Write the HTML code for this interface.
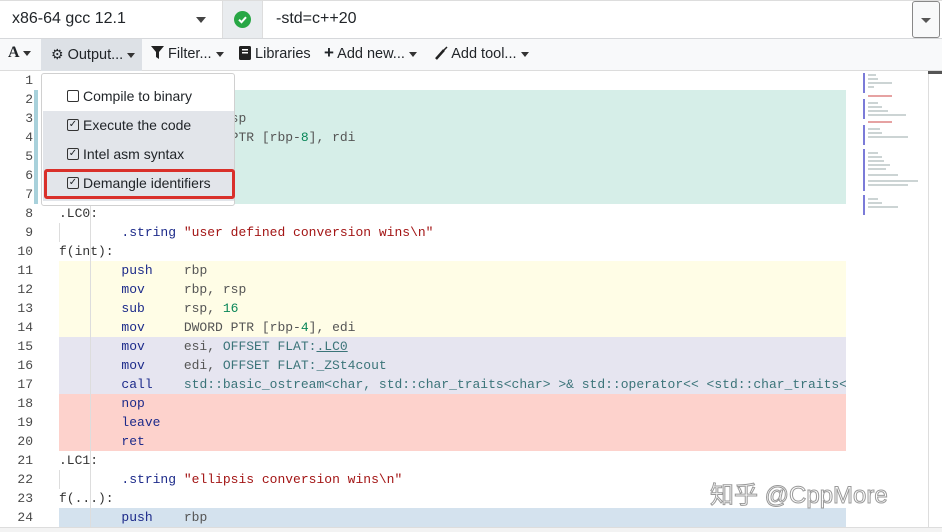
<!DOCTYPE html>
<html><head><meta charset="utf-8"><style>
*{margin:0;padding:0;box-sizing:border-box}
body{width:942px;height:532px;overflow:hidden;background:#fff;font-family:"Liberation Sans",sans-serif;position:relative;color:#212529}
.abs{position:absolute}
.top{left:0;top:0;width:942px;height:39px;background:#fff;border-bottom:1px solid #d6d8db;border-top:1px solid #ddd}
.tb{left:0;top:39px;width:942px;height:32px;background:#f8f9fa;border-bottom:1px solid #dcdcdc}
.tbi{position:absolute;top:46px;font-size:14.5px;color:#212529}
.caret{display:inline-block;width:0;height:0;border-left:4px solid transparent;border-right:4px solid transparent;border-top:5px solid #333;vertical-align:middle;margin-left:4px}
.ln{position:absolute;left:0;width:33px;text-align:right;color:#4a4a4a;font-family:"Liberation Mono",monospace;font-size:13px;height:19px;line-height:19px}
.row{position:absolute;left:59px;width:787px;height:19px;line-height:19px;white-space:pre;font-family:"Liberation Mono",monospace;font-size:13px;color:#555;overflow:hidden}
.m{color:#1c2a8a}.s{color:#a31515}.n{color:#098658}.o{color:#3b7479}.l{color:#333}
.g{position:absolute;width:1px;background:#ddd}
.dd{left:41px;top:73px;width:194px;height:133px;background:#fff;border:1px solid #d0d0d0;border-radius:3px}
.it{position:absolute;left:1px;width:191px;height:29px;line-height:29px;font-size:14px;padding-left:24px;color:#212529}
.cb{position:absolute;left:24px;top:8px;width:12px;height:12px;border:1px solid #333;border-radius:2px;font-size:10px;line-height:10px;text-align:center}
</style></head><body>
<div class="abs top"></div>
<div class="abs" style="left:12px;top:10px;font-size:16px;color:#212529">x86-64 gcc 12.1</div>
<div class="abs" style="left:196px;top:17px;width:0;height:0;border-left:5px solid transparent;border-right:5px solid transparent;border-top:6px solid #444"></div>
<div class="abs" style="left:222px;top:1px;width:41px;height:37px;background:#e9ecef;border-left:1px solid #ddd;border-right:1px solid #ddd"></div>
<div class="abs" style="left:234px;top:11px;width:17px;height:17px;border-radius:50%;background:#28a745"><svg width="17" height="17"><path d="M5 8.7l2.5 2.5 4.5-5" stroke="#fff" stroke-width="2" fill="none"/></svg></div>
<div class="abs" style="left:276px;top:10px;font-size:16px">-std=c++20</div>
<div class="abs" style="left:912px;top:1px;width:28px;height:37px;border:1px solid #888;border-radius:3px;background:#f8f9fa"></div>
<div class="abs" style="left:921px;top:18px;width:0;height:0;border-left:5px solid transparent;border-right:5px solid transparent;border-top:5px solid #555"></div>
<div class="abs tb"></div>
<div class="abs" style="left:41px;top:39px;width:101px;height:32px;background:#dde1e6"></div>
<div class="tbi" style="left:8px;font-weight:bold;font-size:16px;top:44px;font-family:'Liberation Serif',serif">A<span class="caret" style="margin-left:3px"></span></div>
<div class="tbi" style="left:51px"><span style="font-size:14px">⚙</span> Output...<span class="caret"></span></div>
<div class="tbi" style="left:151px"><svg width="13" height="13" style="vertical-align:-1px"><path d="M0 0h13L8 6v7L5 11V6z" fill="#222"/></svg> Filter...<span class="caret"></span></div>
<div class="tbi" style="left:239px"><svg width="12" height="14" style="vertical-align:-2px"><rect x="0" y="0" width="12" height="14" rx="1.5" fill="#222"/><rect x="3" y="3" width="6" height="1.5" fill="#fff"/><rect x="3" y="6" width="6" height="1.5" fill="#fff"/></svg> Libraries</div>
<div class="tbi" style="left:324px"><b style="font-size:17px;line-height:14px">+</b> Add new...<span class="caret"></span></div>
<div class="tbi" style="left:434px"><svg width="14" height="14" style="vertical-align:-2px"><path d="M2 13L10 4" stroke="#222" stroke-width="2.5"/><path d="M10 4l3-3" stroke="#222" stroke-width="1.5"/></svg> Add tool...<span class="caret"></span></div>

<div class="abs" style="left:59px;top:90px;width:787px;height:114px;background:#d6eee8"></div>
<div class="abs" style="left:59px;top:261px;width:787px;height:76px;background:#fffde6"></div>
<div class="abs" style="left:59px;top:337px;width:787px;height:57px;background:#e6e5f0"></div>
<div class="abs" style="left:59px;top:394px;width:787px;height:57px;background:#fdd2cc"></div>
<div class="abs" style="left:59px;top:508px;width:787px;height:19px;background:#d4e2ee"></div>
<div class="abs" style="left:34px;top:90px;width:4px;height:114px;background:#a8d1db"></div>
<div class="g" style="left:90px;top:90px;height:437px"></div>
<div class="g" style="left:59px;top:223px;height:19px"></div>
<div class="g" style="left:59px;top:470px;height:19px"></div>

<div class="ln" style="top:71px">1</div><div class="ln" style="top:90px">2</div><div class="ln" style="top:109px">3</div><div class="ln" style="top:128px">4</div><div class="ln" style="top:147px">5</div><div class="ln" style="top:166px">6</div><div class="ln" style="top:185px">7</div><div class="ln" style="top:204px">8</div><div class="ln" style="top:223px">9</div><div class="ln" style="top:242px">10</div><div class="ln" style="top:261px">11</div><div class="ln" style="top:280px">12</div><div class="ln" style="top:299px">13</div><div class="ln" style="top:318px">14</div><div class="ln" style="top:337px">15</div><div class="ln" style="top:356px">16</div><div class="ln" style="top:375px">17</div><div class="ln" style="top:394px">18</div><div class="ln" style="top:413px">19</div><div class="ln" style="top:432px">20</div><div class="ln" style="top:451px">21</div><div class="ln" style="top:470px">22</div><div class="ln" style="top:489px">23</div><div class="ln" style="top:508px">24</div>

<div class="row" style="top:109px">        <span class="m">mov</span>     rbp, rsp</div>
<div class="row" style="top:128px">        <span class="m">mov</span>     QWORD PTR [rbp-<span class="n">8</span>], rdi</div>
<div class="row l" style="top:204px">.LC0:</div>
<div class="row" style="top:223px">        <span class="m">.string</span> <span class="s">"user defined conversion wins\n"</span></div>
<div class="row l" style="top:242px">f(int):</div>
<div class="row" style="top:261px">        <span class="m">push</span>    rbp</div>
<div class="row" style="top:280px">        <span class="m">mov</span>     rbp, rsp</div>
<div class="row" style="top:299px">        <span class="m">sub</span>     rsp, <span class="n">16</span></div>
<div class="row" style="top:318px">        <span class="m">mov</span>     DWORD PTR [rbp-<span class="n">4</span>], edi</div>
<div class="row" style="top:337px">        <span class="m">mov</span>     esi, <span class="o">OFFSET FLAT:</span><span class="o" style="text-decoration:underline">.LC0</span></div>
<div class="row" style="top:356px">        <span class="m">mov</span>     edi, <span class="o">OFFSET FLAT:_ZSt4cout</span></div>
<div class="row" style="top:375px">        <span class="m">call</span>    <span class="o">std::basic_ostream&lt;char, std::char_traits&lt;char&gt; &gt;&amp; std::operator&lt;&lt; &lt;std::char_traits&lt;char&gt; &gt;</span></div>
<div class="row" style="top:394px">        <span class="m">nop</span></div>
<div class="row" style="top:413px">        <span class="m">leave</span></div>
<div class="row" style="top:432px">        <span class="m">ret</span></div>
<div class="row l" style="top:451px">.LC1:</div>
<div class="row" style="top:470px">        <span class="m">.string</span> <span class="s">"ellipsis conversion wins\n"</span></div>
<div class="row l" style="top:489px">f(...):</div>
<div class="row" style="top:508px">        <span class="m">push</span>    rbp</div>

<div class="abs" style="left:846px;top:71px;width:82px;height:456px;background:#fff"></div>
<svg class="abs" style="left:846px;top:71px" width="82" height="145">
<g stroke="#7b7bd8" stroke-width="2"><path d="M18 2v20M18 28v20M18 54v20M18 78v42M18 124v20"/></g>
<g stroke="#9aa" stroke-width="1"><path d="M22 4h8M22 8h10M22 12h24M22 16h6M22 32h10M22 36h14M22 40h20M22 44h38M22 58h12M22 62h14M22 66h40M22 82h10M22 86h14M22 90h16M22 94h22M22 98h18M22 104h30M22 110h50M22 114h40M22 128h10M22 132h14M22 136h30"/></g>
<g stroke="#c44" stroke-width="1"><path d="M22 25h24M22 51h24"/></g>
</svg>
<div class="abs" style="left:928px;top:71px;width:1px;height:456px;background:#ddd"></div>
<div class="abs" style="left:928px;top:71px;width:14px;height:3px;background:#555"></div>
<div class="abs" style="left:0;top:527px;width:942px;height:5px;background:#f3f3f3;border-top:1px solid #ddd"></div>

<div class="abs dd">
<div class="it" style="top:8px"><span class="cb"></span><span style="padding-left:16px">Compile to binary</span></div>
<div style="position:absolute;left:1px;top:37px;width:191px;height:90px;background:#e2e5ea"></div>
<div class="it" style="top:37px"><span class="cb">✓</span><span style="padding-left:16px">Execute the code</span></div>
<div class="it" style="top:66px"><span class="cb">✓</span><span style="padding-left:16px">Intel asm syntax</span></div>
<div class="it" style="top:95px"><span class="cb">✓</span><span style="padding-left:16px">Demangle identifiers</span></div>
</div>
<div class="abs" style="left:44px;top:169px;width:191px;height:30px;border:3px solid #d9302a;border-radius:3px"></div>

<div class="abs" style="left:710px;top:475px;font-size:24px;color:#fff;-webkit-text-stroke:1px #999;font-family:'Liberation Sans','Noto Sans CJK SC',sans-serif">知乎 @CppMore</div>
</body></html>
